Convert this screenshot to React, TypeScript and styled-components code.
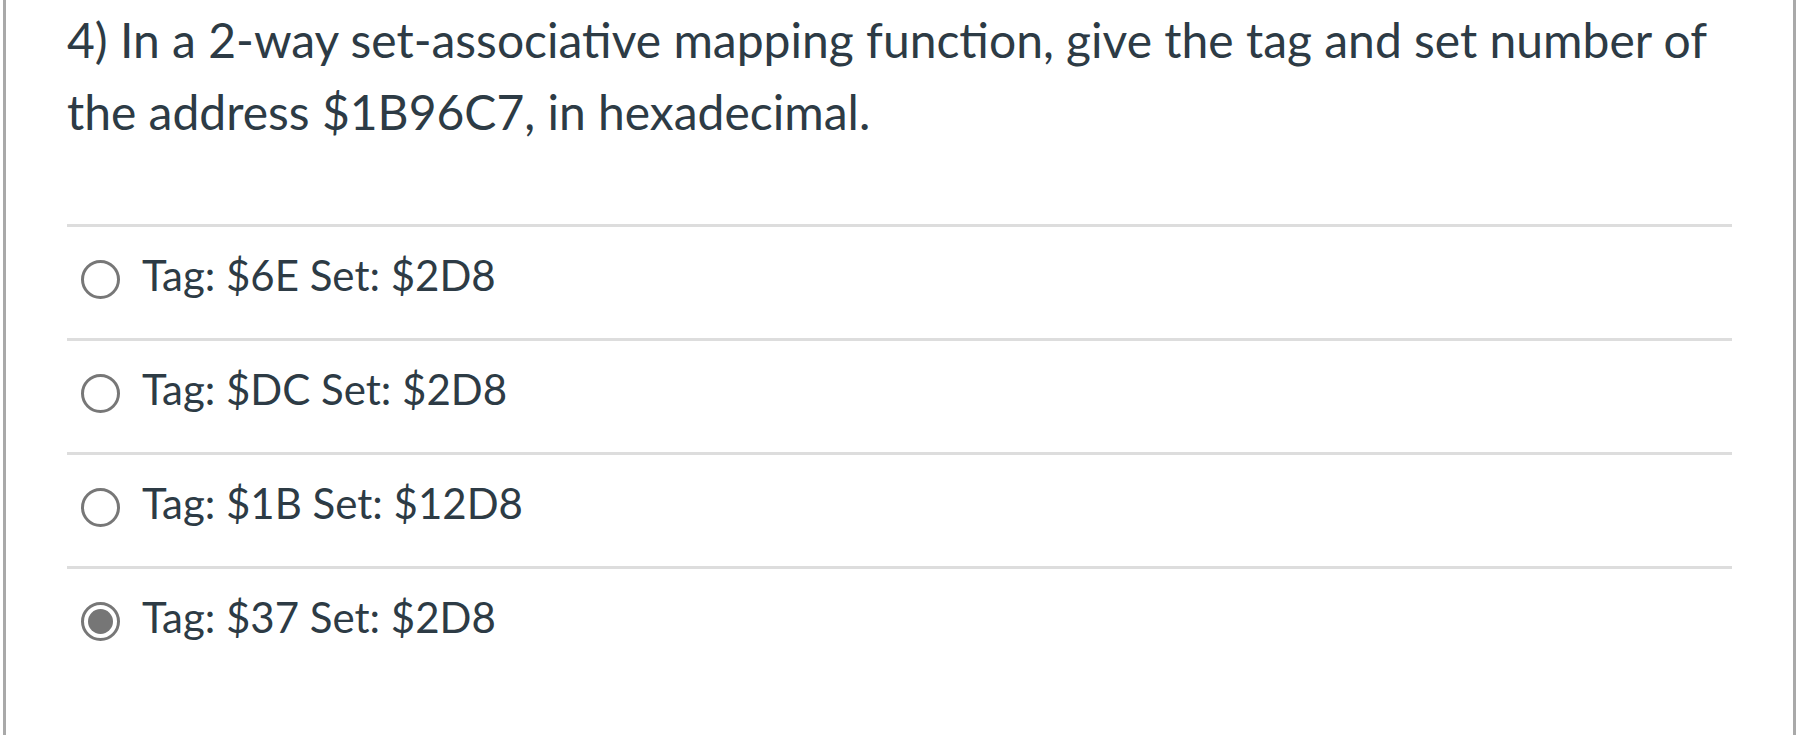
import React from 'react';
import styled, { createGlobalStyle } from 'styled-components';

const GlobalStyle = createGlobalStyle`
  html, body {
    margin: 0;
    padding: 0;
    background: #ffffff;
  }
  body {
    font-family: Lato, "Liberation Sans", sans-serif;
    color: #2d3b45;
  }
`;

const Panel = styled.div`
  box-sizing: border-box;
  margin-left: 3px;
  width: 1793px;
  min-height: 735px;
  border-left: 3px solid #a9a9a9;
  border-right: 3px solid #a9a9a9;
  padding: 0 61px 0 61px;
`;

const Question = styled.div`
  font-size: 48px;
  line-height: 72px;
  padding-top: 4px;
  margin: 0 0 76px;
`;

const Answers = styled.div`
  display: flex;
  flex-direction: column;
`;

const Answer = styled.label`
  display: flex;
  align-items: flex-start;
  gap: 22px;
  border-top: 3px solid #dddddd;
  padding: 17px 0 31px 14px;
  cursor: pointer;
`;

const Radio = styled.span<{ checked?: boolean }>`
  box-sizing: border-box;
  flex: none;
  width: 39px;
  height: 39px;
  margin-top: 16px;
  border-radius: 50%;
  border: 3px solid #777777;
  display: flex;
  align-items: center;
  justify-content: center;

  &::after {
    content: '';
    display: ${({ checked }) => (checked ? 'block' : 'none')};
    width: 25px;
    height: 25px;
    border-radius: 50%;
    background: #767676;
  }
`;

const Label = styled.span`
  font-size: 42px;
  line-height: 63px;
`;

const answers = [
  { text: 'Tag: $6E Set: $2D8', checked: false },
  { text: 'Tag: $DC Set: $2D8', checked: false },
  { text: 'Tag: $1B Set: $12D8', checked: false },
  { text: 'Tag: $37 Set: $2D8', checked: true },
];

export default function App() {
  return (
    <>
      <GlobalStyle />
      <Panel>
        <Question>
          4) In a 2-way set-associative mapping function, give the tag and set number of the address
          $1B96C7, in hexadecimal.
        </Question>
        <Answers>
          {answers.map((a) => (
            <Answer key={a.text}>
              <Radio checked={a.checked} />
              <Label>{a.text}</Label>
            </Answer>
          ))}
        </Answers>
      </Panel>
    </>
  );
}
